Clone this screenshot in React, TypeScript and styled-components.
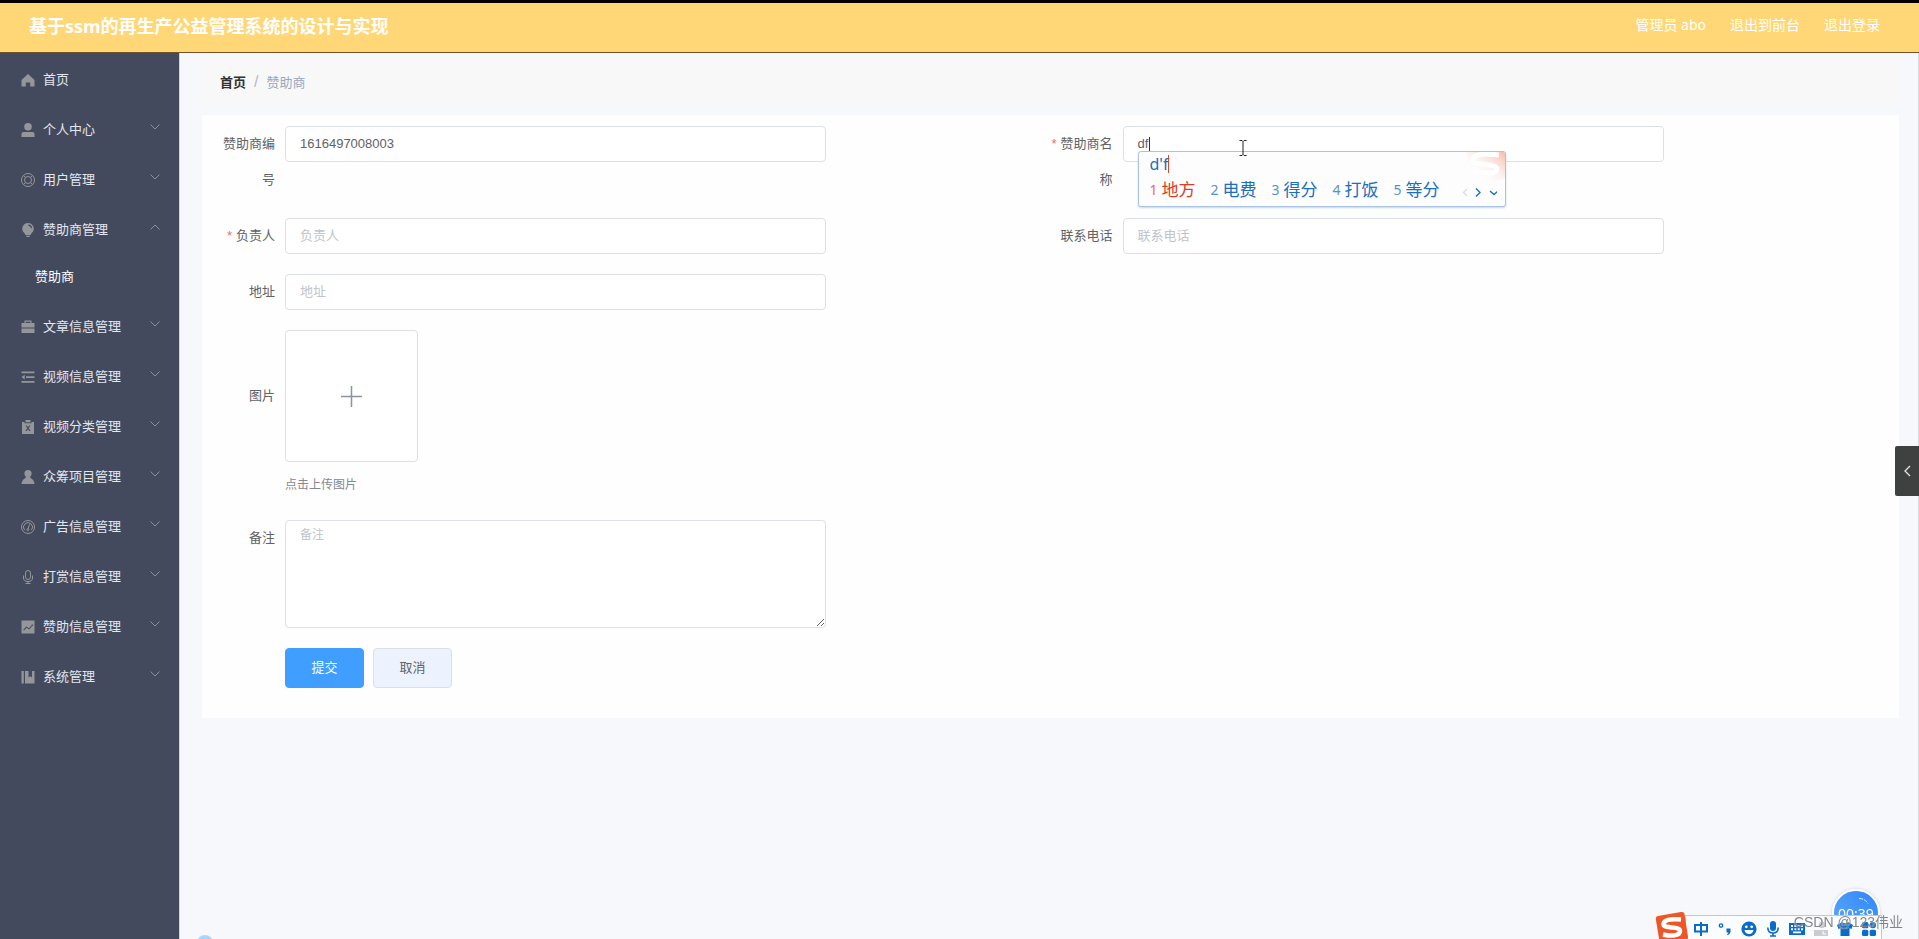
import React from 'react';
import styled, { createGlobalStyle } from 'styled-components';

const latinUi = `"Noto Sans", "Noto Sans CJK SC", sans-serif`;
const formFont = `"Liberation Sans", "Noto Sans CJK SC", sans-serif`;

const GlobalStyle = createGlobalStyle`
  *, *::before, *::after { box-sizing: border-box; }
  body { margin: 0; background: #f6f8fc; font-family: ${formFont}; font-size: 13px; color: #606266; }
  ul, ol { list-style: none; margin: 0; padding: 0; }
  a { text-decoration: none; color: inherit; }
  button, input, textarea { font-family: inherit; }
`;

const Page = styled.div`
  min-height: 100vh;
  display: flex;
  flex-direction: column;
  border-top: 3px solid #000;
  overflow: hidden;
`;

const Header = styled.header`
  display: flex;
  align-items: center;
  justify-content: space-between;
  height: 50px;
  padding: 0 39px 4px 29px;
  background: #ffd777;
  border-bottom: 1px solid #70542a;
  color: #fff;
  font-family: ${latinUi};
`;

const Title = styled.h1`
  margin: 0;
  font-size: 18px;
  line-height: 24px;
  font-weight: 700;
`;

const UserNav = styled.nav`
  display: flex;
  gap: 24px;
  padding-bottom: 2px;
  font-size: 14px;
  line-height: 20px;
`;

const Body = styled.div`
  flex: 1;
  display: flex;
`;

const Sidebar = styled.nav`
  flex: none;
  width: 180px;
  padding-top: 1px;
  background: #444a5d;
  border-right: 1px solid #d4d2da;
`;

const MenuRow = styled.button`
  display: flex;
  align-items: center;
  gap: 8px;
  width: 100%;
  height: 50px;
  padding: 0 19px 0 21px;
  border: 0;
  background: none;
  color: #e3e7f0;
  font-size: 13px;
  text-align: left;
  cursor: pointer;
`;

const MenuText = styled.span`
  flex: 1;
  padding-bottom: 2px;
`;

const SubLink = styled.a`
  display: block;
  padding: 0 0 2px 35px;
  line-height: 45px;
  color: #fff;
`;

const MenuIcon = styled.svg`
  flex: none;
  width: 14px;
  height: 14px;
  margin-top: 2px;
  fill: #949699;
  stroke: none;
  overflow: visible;
`;

const Chevron = styled.svg<{ $open?: boolean }>`
  flex: none;
  width: 10px;
  height: 6px;
  margin-bottom: 4px;
  fill: none;
  stroke: #8b8f9a;
  transform: ${p => (p.$open ? 'rotate(180deg)' : 'none')};
`;

const Main = styled.main`
  flex: 1;
  min-width: 0;
  padding: 7px 19px 40px 22px;
  border-right: 1px solid #d9dbe0;
`;

const Breadcrumb = styled.ol`
  display: flex;
  align-items: center;
  gap: 8px;
  height: 46px;
  margin-bottom: 9px;
  padding: 0 18px 3px;
  background: #f8f8f9;
  color: #97a8be;
`;

const HomeCrumb = styled.a`
  font-weight: 700;
  color: #303133;
`;

const Separator = styled.li`
  font-size: 16px;
  color: #b4b8c0;
`;

const Card = styled.section`
  padding: 11px 12px 30px 10px;
  background: #fefefe;
`;

const Form = styled.form`
  display: flex;
  flex-direction: column;
  gap: 20px;
`;

const Columns = styled.div`
  display: grid;
  grid-template-columns: 1fr 1fr;
`;

const Field = styled.div`
  display: flex;
  align-items: flex-start;
  min-width: 0;
`;

const Label = styled.label<{ $tall?: boolean }>`
  flex: none;
  width: 73px;
  padding-right: 10px;
  line-height: ${p => (p.$tall ? 132 : 36)}px;
  text-align: right;
`;

const Star = styled.span`
  margin-right: 4px;
  color: #f56c6c;
`;

const Control = styled.div`
  position: relative;
  flex: 0 1 541px;
  min-width: 0;
`;

const Input = styled.input`
  display: block;
  width: 100%;
  height: 36px;
  padding: 0 14px 2px;
  border: 1px solid #dcdfe6;
  border-radius: 4px;
  background: #fff;
  color: #606266;
  font-size: 13px;
  outline: none;
  &::placeholder { color: #c0c4cc; }
`;

const TextArea = styled.textarea`
  display: block;
  width: 100%;
  height: 108px;
  padding: 5px 14px;
  border: 1px solid #dcdfe6;
  border-radius: 4px;
  background: #fff;
  color: #606266;
  font-size: 12px;
  line-height: 18px;
  resize: vertical;
  outline: none;
  &::placeholder { color: #c0c4cc; }
`;

const Upload = styled.button`
  display: flex;
  align-items: center;
  justify-content: center;
  width: 133px;
  height: 132px;
  border: 1px solid #dcdfe6;
  border-radius: 4px;
  background: #fff;
  cursor: pointer;
`;

const Tip = styled.div`
  padding-top: 8px;
  font-size: 12px;
  line-height: 30px;
  color: #84888f;
`;

const Actions = styled.div`
  display: flex;
  gap: 9px;
  padding-left: 73px;
`;

const Button = styled.button<{ $primary?: boolean }>`
  width: 79px;
  height: 40px;
  padding: 0 0 4px;
  border: 1px solid ${p => (p.$primary ? '#409eff' : '#dcdfe6')};
  border-radius: 4px;
  background: ${p => (p.$primary ? '#409eff' : '#ecf3ff')};
  color: ${p => (p.$primary ? '#fff' : '#606266')};
  font-size: 13px;
  cursor: pointer;
`;

const TextCaret = styled.span`
  position: absolute;
  top: 11px;
  left: 26px;
  width: 1px;
  height: 15px;
  background: #333;
`;

const Pointer = styled.svg`
  position: absolute;
  top: 14px;
  left: 116px;
  z-index: 3;
  width: 8px;
  height: 16px;
  fill: none;
  stroke: #222;
`;

const Candidates = styled.div`
  position: absolute;
  top: 25px;
  left: 15px;
  z-index: 2;
  width: 368px;
  height: 56px;
  padding: 0 11px;
  border: 1px solid #a9c3e2;
  border-radius: 3px;
  background: #fdfdfe;
  box-shadow: 0 1px 2px #c8d6e8;
  color: #1b6fbb;
  font-family: ${latinUi};
  overflow: hidden;
`;

const Composing = styled.div`
  display: flex;
  align-items: center;
  height: 24px;
  font-size: 16px;
  line-height: 22px;
  &::after { content: ''; width: 1px; height: 18px; background: #d8492f; }
`;

const CandidateRow = styled.div`
  display: flex;
  align-items: center;
  height: 28px;
`;

const Candidate = styled.span<{ $first?: boolean }>`
  flex: none;
  display: flex;
  align-items: center;
  gap: 4px;
  width: 61px;
  font-size: 17px;
  line-height: 28px;
  color: ${p => (p.$first ? '#e03c22' : '#1b6fbb')};
  small { font-size: 14px; opacity: 0.75; }
`;

const Pager = styled.svg`
  flex: none;
  width: 38px;
  height: 12px;
  margin: 3px 0 0 4px;
  fill: none;
  stroke: #1b6fbb;
  stroke-width: 1.4;
`;

const FaintLogo = styled.svg`
  position: absolute;
  top: 0;
  right: 0;
  width: 42px;
  height: 32px;
`;

const SideTab = styled.button`
  position: fixed;
  top: 446px;
  right: 0;
  display: flex;
  align-items: center;
  justify-content: center;
  width: 24px;
  height: 50px;
  padding: 0;
  border: 0;
  border-radius: 2px 0 0 2px;
  background: #3f4040;
`;

const Bubble = styled.span`
  position: fixed;
  left: 197px;
  bottom: -12px;
  width: 16px;
  height: 16px;
  border-radius: 8px;
  background: #a5d6fb;
`;

const Recorder = styled.div`
  position: fixed;
  right: 39px;
  bottom: 2px;
  width: 48px;
  height: 48px;
  padding-top: 13px;
  border: 2px solid #fff;
  border-radius: 24px;
  background: linear-gradient(45deg, #62aaf5, #2f86fb);
  box-shadow: 0 0 3px #c6c9d2;
  color: #fff;
  font-family: ${latinUi};
  font-size: 14px;
  line-height: 20px;
  text-align: center;
`;

const Glint = styled.svg`
  position: absolute;
  top: 5px;
  right: 8px;
  width: 12px;
  height: 10px;
`;

const ImeBar = styled.div`
  position: fixed;
  right: 37px;
  bottom: 0;
  display: flex;
  align-items: center;
  height: 24px;
  padding: 3px 0 0 3px;
  border: 1px solid #b4cbe6;
  border-bottom: 0;
  background: #fbfcfe;
`;

const ImeTool = styled.span`
  display: flex;
  justify-content: center;
  width: 24px;
`;

const ImeIcon = styled.svg`
  width: 16px;
  height: 16px;
  fill: #0b6bcb;
  overflow: visible;
`;

const ImeLogo = styled.svg`
  position: fixed;
  right: 231px;
  bottom: -4px;
  width: 33px;
  height: 32px;
`;

const Watermark = styled.div`
  position: fixed;
  right: 16px;
  bottom: 7px;
  font-size: 14px;
  line-height: 20px;
  color: rgba(110, 112, 116, 0.85);
  text-shadow: 0 0 1px #fff;
`;

const ring = { fill: 'none', stroke: '#949699' };

const icons: Record<string, React.ReactNode> = {
  home: <path d="M7 1 .5 7v6.5h4.300V9.500h4.400v4H13.500V7Z" />,
  user: <><circle cx="7" cy="3.800" r="3.800" /><path d="M.5 14v-3q0-2 2-2h9q2 0 2 2v3Z" /></>,
  help: <g {...ring}><circle cx="7" cy="7" r="6.500" /><circle cx="7" cy="7" r="3.500" /><path d="m2.500 2.500 2 2M11.500 2.500l-2 2M2.500 11.500l2-2M11.500 11.500l-2-2" /></g>,
  bulb: <path fillRule="evenodd" d="M7 0a5.700 5.700 0 0 1 3.500 10.200L9.500 12h-5L3.500 10.200A5.700 5.700 0 0 1 7 0Zm.3 1.500v1.200a3 3 0 0 1 2.700 2.600h1.100a4 4 0 0 0-3.800-3.800ZM5 12.800h4L8.500 14h-3Z" />,
  briefcase: <path fillRule="evenodd" d="M3.500 3V.5h7V3h3v4.500H.5V3Zm1.200 0h4.600V1.700H4.700ZM.5 8.500h13V13H.5Z" />,
  fold: <path d="M.5 1.500h13v1.800H.5zM5 6.200h8.500V8H5zM.5 10.900h13v1.800H.5zM3.700 4.700v4.800L.5 7.100Z" />,
  clipboard: <><path fillRule="evenodd" d="M1 2h2.500v1.300h7V2H13v12H1Zm3.500 3.500 1.800 2.600-1.900 2.900h1.400L7 9.100l1.200 1.900h1.400L7.700 8.100l1.800-2.600H8.200L7 7.200 5.800 5.500Z" /><path d="M4.500 0h5v2.300h-5z" /></>,
  person: <><circle cx="7" cy="3.600" r="3.600" /><path d="M5 6.500h4l.5 1.500q3.500 1.500 4 6H.5q.5-4.500 4-6Z" /></>,
  gauge: <g {...ring}><circle cx="7" cy="7" r="6.500" /><path d="M3.500 10A4.500 4.500 0 1 1 10.500 10M8.700 4.300 7 9" /><circle cx="6.800" cy="9.700" r="1" /></g>,
  mic: <g {...ring}><rect x="4.500" y=".5" width="5" height="9" rx="2.500" /><path d="M2.500 5.500V8q0 3.500 4.500 3.500T11.500 8V5.500M7 11.500v2M4.500 13.500h5" /></g>,
  chart: <path fillRule="evenodd" d="M.5.5h13v13H.5Zm1.800 9.200.7.800 2.600-2.700 2.500 1.600 3.500-4 .1 1 .6-2-2.200.3.800.3-3 3.200-2.600-1.600Z" />,
  book: <path fillRule="evenodd" d="M.5 1h2.300v12.500H.5ZM4 1h3.500v6.500l1.800-1.300L11 7.500V1h2.500v12.500H4Z" />,
};

type Entry = { text: string; icon: string; children?: string[]; leaf?: boolean };

const menu: Entry[] = [
  { text: '首页', icon: 'home', leaf: true },
  { text: '个人中心', icon: 'user' },
  { text: '用户管理', icon: 'help' },
  { text: '赞助商管理', icon: 'bulb', children: ['赞助商'] },
  { text: '文章信息管理', icon: 'briefcase' },
  { text: '视频信息管理', icon: 'fold' },
  { text: '视频分类管理', icon: 'clipboard' },
  { text: '众筹项目管理', icon: 'person' },
  { text: '广告信息管理', icon: 'gauge' },
  { text: '打赏信息管理', icon: 'mic' },
  { text: '赞助信息管理', icon: 'chart' },
  { text: '系统管理', icon: 'book' },
];

const candidates = ['地方', '电费', '得分', '打饭', '等分'];

function CandidateWindow() {
  return (
    <Candidates>
      <FaintLogo viewBox="0 0 42 32">
        <defs>
          <linearGradient id="fade" x1="0" y1="1" x2="1" y2="0">
            <stop offset="0.3" stopColor="#fdf1ee" stopOpacity="0" />
            <stop offset="1" stopColor="#f9b9a5" />
          </linearGradient>
        </defs>
        <path d="M3 0H42V26Q24 36 8 26Z" fill="url(#fade)" />
        <path d="M36 3Q10 0 10 8c0 6 24 3 24 9 0 5-12 5-24 2" fill="none" stroke="#fff" strokeWidth="5" />
      </FaintLogo>
      <Composing>d'f</Composing>
      <CandidateRow>
        {candidates.map((word, i) => (
          <Candidate key={word} $first={i === 0}><small>{i + 1}</small>{word}</Candidate>
        ))}
        <Pager viewBox="0 0 38 12">
          <path d="M8 3 4.500 6.500 8 10" opacity="0.2" />
          <path d="m17 2.500 4 4-4 4M31 5l4 3.500 4-3.500" />
        </Pager>
      </CandidateRow>
    </Candidates>
  );
}

function ImeToolbar() {
  return (
    <>
      <ImeBar>
        <ImeTool><ImeIcon viewBox="0 0 16 16"><path d="M2 4h12v6.500H2ZM8 1v14" fill="none" stroke="#0b6bcb" strokeWidth="2" /></ImeIcon></ImeTool>
        <ImeTool><ImeIcon viewBox="0 0 16 16"><circle cx="4" cy="4.500" r="1.700" fill="none" stroke="#0b6bcb" strokeWidth="1.300" /><path d="M9.500 7.500h4V11q-.5 2.500-3 3.300l-.5-1q1.300-.6 1.400-1.800H9.500Z" /></ImeIcon></ImeTool>
        <ImeTool><ImeIcon viewBox="0 0 16 16"><circle cx="8" cy="8" r="7.600" /><circle cx="5.300" cy="5.800" r="1.400" fill="#fff" /><circle cx="10.700" cy="5.800" r="1.400" fill="#fff" /><path d="M3.500 9h9q-.8 4-4.500 4T3.500 9Z" fill="#fff" /></ImeIcon></ImeTool>
        <ImeTool><ImeIcon viewBox="0 0 16 16"><rect x="5" width="6" height="10" rx="3" /><path d="M2.800 6.500q0 5.500 5.200 5.500t5.200-5.500M8 12v3M5 15h6" fill="none" stroke="#0b6bcb" strokeWidth="1.600" /></ImeIcon></ImeTool>
        <ImeTool><ImeIcon viewBox="0 0 16 16"><path fillRule="evenodd" d="M0 2h16v12H0Zm2 2v2h2V4Zm3.400 0v2h2V4Zm3.300 0v2h2V4ZM12 4v2h2V4ZM2 7.300v2h2v-2Zm3.400 0v2h2v-2Zm3.300 0v2h2v-2Zm3.300 0v2h2v-2ZM4 10.600v1.600h8v-1.600Z" /></ImeIcon></ImeTool>
        <ImeTool><ImeIcon viewBox="0 0 16 16"><g fill="#c9ccd3"><circle cx="9" cy="4" r="3.200" /><path d="M1 9h14v6H1Z" /></g><path d="M10 10v3h3" fill="none" stroke="#fff" /></ImeIcon></ImeTool>
        <ImeTool><ImeIcon viewBox="0 0 16 16"><path d="M5 1q3 2.500 6 0l5 3-1.500 4-2-.7V15h-9V7.300l-2 .7L0 4Z" /></ImeIcon></ImeTool>
        <ImeTool><ImeIcon viewBox="0 0 16 16"><rect x="1" y="1" width="6.300" height="6.300" rx="1.500" /><rect x="8.700" y="1" width="6.300" height="6.300" rx="3" /><rect x="1" y="8.700" width="6.300" height="6.300" rx="1.500" /><rect x="8.700" y="8.700" width="6.300" height="6.300" rx="1.500" /></ImeIcon></ImeTool>
      </ImeBar>
      <ImeLogo viewBox="0 0 33 32">
        <path d="M3 5 26 1q3-.5 3.500 2L33 26q.3 3-2.500 3.500L8 33q-3 .3-3.500-2.500L.8 8Q.5 5.500 3 5Z" fill="#ee5527" />
        <path d="M26 8.500Q9 7 8.500 13c-.3 5.500 16.500 1.500 16.500 7 0 5-9 5.500-17 3.500" fill="none" stroke="#fff" strokeWidth="4.500" />
      </ImeLogo>
    </>
  );
}

export default function App() {
  return (
    <>
      <GlobalStyle />
      <Page>
        <Header>
          <Title>基于ssm的再生产公益管理系统的设计与实现</Title>
          <UserNav>
            <span>管理员 abo</span>
            <a href="#front">退出到前台</a>
            <a href="#logout">退出登录</a>
          </UserNav>
        </Header>
        <Body>
          <Sidebar>
            <ul>
              {menu.map(item => (
                <li key={item.text}>
                  <MenuRow type="button">
                    <MenuIcon viewBox="0 0 14 14">{icons[item.icon]}</MenuIcon>
                    <MenuText>{item.text}</MenuText>
                    {!item.leaf && (
                      <Chevron viewBox="0 0 10 6" $open={!!item.children}><path d="m.5.5 4.500 4.500L9.500.5" /></Chevron>
                    )}
                  </MenuRow>
                  {item.children?.map(child => <SubLink key={child} href="#sponsor">{child}</SubLink>)}
                </li>
              ))}
            </ul>
          </Sidebar>
          <Main>
            <Breadcrumb>
              <li><HomeCrumb href="#home">首页</HomeCrumb></li>
              <Separator>/</Separator>
              <li>赞助商</li>
            </Breadcrumb>
            <Card>
              <Form>
                <Columns>
                  <Field>
                    <Label htmlFor="code">赞助商编号</Label>
                    <Control><Input id="code" defaultValue="1616497008003" /></Control>
                  </Field>
                  <Field>
                    <Label htmlFor="name"><Star>*</Star>赞助商名称</Label>
                    <Control>
                      <Input id="name" defaultValue="df" />
                      <TextCaret />
                      <Pointer viewBox="0 0 8 16"><path d="M.5.500h2.500l1 1 1-1h2.500M4 1.500v13M.5 15.500h2.500l1-1 1 1h2.500" /></Pointer>
                      <CandidateWindow />
                    </Control>
                  </Field>
                </Columns>
                <Columns>
                  <Field>
                    <Label htmlFor="leader"><Star>*</Star>负责人</Label>
                    <Control><Input id="leader" placeholder="负责人" /></Control>
                  </Field>
                  <Field>
                    <Label htmlFor="phone">联系电话</Label>
                    <Control><Input id="phone" placeholder="联系电话" /></Control>
                  </Field>
                </Columns>
                <Columns>
                  <Field>
                    <Label htmlFor="address">地址</Label>
                    <Control><Input id="address" placeholder="地址" /></Control>
                  </Field>
                </Columns>
                <Field>
                  <Label htmlFor="picture" $tall>图片</Label>
                  <Control>
                    <Upload id="picture" type="button">
                      <svg width="21" height="21" viewBox="0 0 21 21" stroke="#8c939d" strokeWidth="1.500"><path d="M10.500 0v21M0 10.500h21" /></svg>
                    </Upload>
                    <Tip>点击上传图片</Tip>
                  </Control>
                </Field>
                <Field>
                  <Label htmlFor="remark">备注</Label>
                  <Control><TextArea id="remark" placeholder="备注" /></Control>
                </Field>
                <Actions>
                  <Button type="button" $primary>提交</Button>
                  <Button type="button">取消</Button>
                </Actions>
              </Form>
            </Card>
          </Main>
        </Body>
      </Page>
      <SideTab type="button" aria-label="展开">
        <svg width="7" height="12" viewBox="0 0 7 12" fill="none" stroke="#e4e4e4" strokeWidth="1.300"><path d="M6 1 1 6l5 5" /></svg>
      </SideTab>
      <Bubble />
      <Recorder>
        <Glint viewBox="0 0 12 10"><path d="M1 2.500q6 0 9 5" fill="none" stroke="#d6e8ff" strokeDasharray="4 1" /></Glint>
        00:39
      </Recorder>
      <ImeToolbar />
      <Watermark>CSDN @123伟业</Watermark>
    </>
  );
}
